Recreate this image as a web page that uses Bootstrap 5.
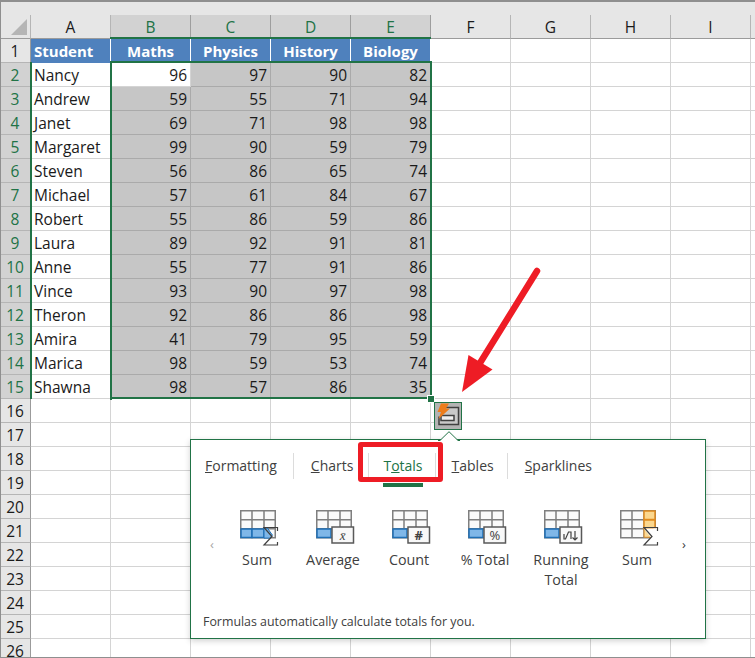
<!DOCTYPE html>
<html lang="en">
<head>
  <meta charset="UTF-8">
  <meta name="viewport" content="width=device-width, initial-scale=1.0">
  <title>Quick Analysis</title>
  <link href="https://cdn.jsdelivr.net/npm/bootstrap@5.3.2/dist/css/bootstrap.min.css" rel="stylesheet">
  <style>
    html, body { margin: 0; background: #fff; overflow: hidden; }
    .sheet { position: relative; width: 755px; height: 658px; overflow: hidden; font-family: "Open Sans", "Noto Sans", sans-serif; font-size: 15.5px; color: #1a1a1a; background: #fff; }
    .sheet-frame { position: absolute; inset: 0; border: solid #8f8f8f; border-width: 2px 0 1px 1px; pointer-events: none; z-index: 5; }
    .top-strip { height: 15px; background: #e6e6e6; }
    .sheet-grid { display: grid; grid-template-columns: 31px repeat(9, 80px) 45px; grid-auto-rows: 24px; }
    .xl-cell { border-right: 1px solid #d4d4d4; border-bottom: 1px solid #d4d4d4; padding: 0 3px; line-height: 25px; white-space: nowrap; overflow: hidden; }
    .xl-num { text-align: right; }
    .xl-sel { background: #c6c6c6; border-color: #aaa; }
    .xl-tbl { background: #4f81bd; color: #fff; font-weight: 700; font-size: 15px; border-right-color: #fff; border-bottom-color: #4f81bd; }
    .xl-col { background: #e6e6e6; text-align: center; border-right-color: #b5b5b5; border-bottom-color: #9b9b9b; }
    .xl-col.on { background: #d2d2d2; color: #217346; border-right-color: #9e9e9e; }
    .xl-row { background: #e6e6e6; text-align: center; padding: 0; border-right-color: #9b9b9b; border-bottom-color: #b5b5b5; }
    .xl-row.on { background: #d2d2d2; color: #217346; }
    .corner-tri { width: 0; height: 0; border-style: solid; border-width: 0 0 16px 16px; border-color: transparent transparent #b5b5b5 transparent; margin: 4px 0 0 11px; }
    .sel-line { position: absolute; background: #217346; z-index: 2; }
    .sel-handle { position: absolute; left: 427px; top: 395px; width: 6px; height: 6px; background: #217346; border: 1px solid #fff; box-sizing: content-box; z-index: 3; }
    .qa-btn { position: absolute; left: 434px; top: 402px; width: 28px; height: 28px; background: #b3b3b3; border: 1px solid #217346; z-index: 3; display: flex; align-items: center; justify-content: center; }
    .qa-panel { position: absolute; left: 190px; top: 439px; width: 516px; height: 200px; background: #fff; border: 1px solid #217346; box-shadow: 0 2px 6px rgba(0, 0, 0, .18); z-index: 3; font-family: "Open Sans", "Noto Sans", sans-serif; color: #404040; }
    .qa-notch { position: absolute; left: 247px; top: -9px; width: 22px; height: 10px; }
    .qa-tabs { height: 26px; margin-top: 13px; padding-left: 14px; font-size: 14px; }
    .qa-tab { line-height: 26px; white-space: nowrap; }
    .qa-tab.on { color: #217346; position: relative; }
    .qa-tab.on::after { content: ""; position: absolute; left: 0; right: 0; top: 30px; height: 4px; background: #217346; }
    .qa-sep { width: 1px; height: 26px; background: #dcdcdc; }
    .qa-gallery { position: absolute; left: 28px; top: 70px; }
    .qa-item { width: 76px; text-align: center; font-size: 14.3px; line-height: 20px; color: #404040; }
    .qa-item svg { display: block; margin: 0 0 4px 21px; }
    .qa-chev { position: absolute; top: 96px; font-size: 13px; line-height: 16px; }
    .qa-foot { position: absolute; left: 12px; top: 173px; font-size: 12.4px; line-height: 18px; color: #404040; }
    .red-box { position: absolute; left: 358px; top: 442px; width: 85px; height: 40px; border: 5px solid #ee1c25; border-radius: 3px; z-index: 4; }
    .red-arrow { position: absolute; left: 0; top: 0; z-index: 4; }
  </style>
</head>
<body>
  <div class="sheet">
    <div class="top-strip"></div>
    <div class="sheet-grid" id="sheetGrid"></div>
    <div class="sheet-frame"></div>

    <!-- selection outline -->
    <div class="sel-line" style="left:110px;top:37px;width:321px;height:2px"></div>
    <div class="sel-line" style="left:110px;top:61px;width:322px;height:2px"></div>
    <div class="sel-line" style="left:30px;top:62px;width:2px;height:337px"></div>
    <div class="sel-line" style="left:110px;top:62px;width:2px;height:338px"></div>
    <div class="sel-line" style="left:430px;top:62px;width:2px;height:335px"></div>
    <div class="sel-line" style="left:110px;top:397px;width:318px;height:2px"></div>
    <div class="sel-handle"></div>

    <!-- quick analysis button -->
    <div class="qa-btn">
      <svg width="26" height="26" viewBox="0 0 26 26">
        <path d="M11 4.500h12.500v17H4v-8" fill="#c9c9c9" stroke="#404040" stroke-width="1.500"/>
        <path d="M6 12.500h13v5H6z" fill="#efefef" stroke="#404040" stroke-width="1.500"/>
        <path d="M6 .5h8l-3 5h4L3.500 16l2.500-7H2.500z" fill="#ed7d1c"/>
      </svg>
    </div>

    <div class="qa-panel">
      <svg class="qa-notch" viewBox="0 0 22 10"><path d="M0 9.500h2L11 .7 20 9.500h2" fill="#fff" stroke="#217346"/></svg>
      <div class="qa-tabs d-flex align-items-center">
        <span class="qa-tab"><u>F</u>ormatting</span>
        <span class="qa-sep" style="margin:0 17px 0 16px"></span>
        <span class="qa-tab"><u>C</u>harts</span>
        <span class="qa-sep" style="margin:0 14px 0 15px"></span>
        <span class="qa-tab on">T<u>o</u>tals</span>
        <span class="qa-sep" style="margin:0 16px 0 12px"></span>
        <span class="qa-tab"><u>T</u>ables</span>
        <span class="qa-sep" style="margin:0 17px 0 13px"></span>
        <span class="qa-tab"><u>S</u>parklines</span>
      </div>
      <span class="qa-chev" style="left:19px;color:#a6a6a6">‹</span>
      <div class="qa-gallery d-flex" id="qaGallery"></div>
      <span class="qa-chev" style="left:491px;color:#404040">›</span>
      <div class="qa-foot">Formulas automatically calculate totals for you.</div>
    </div>

    <div class="red-box"></div>
    <svg class="red-arrow" width="755" height="658" viewBox="0 0 755 658">
      <path d="M537 271 480 363" fill="none" stroke="#ee1c25" stroke-width="6.500" stroke-linecap="round"/>
      <path d="M462 392 468.500 355 492.500 369.500z" fill="#ee1c25"/>
    </svg>
  </div>

  <script src="https://cdn.jsdelivr.net/npm/bootstrap@5.3.2/dist/js/bootstrap.bundle.min.js"></script>
  <script>
    const columns = ['A', 'B', 'C', 'D', 'E', 'F', 'G', 'H', 'I', ''];
    const students = [
      ['Student', 'Maths', 'Physics', 'History', 'Biology'],
      ['Nancy', 96, 97, 90, 82],
      ['Andrew', 59, 55, 71, 94],
      ['Janet', 69, 71, 98, 98],
      ['Margaret', 99, 90, 59, 79],
      ['Steven', 56, 86, 65, 74],
      ['Michael', 57, 61, 84, 67],
      ['Robert', 55, 86, 59, 86],
      ['Laura', 89, 92, 91, 81],
      ['Anne', 55, 77, 91, 86],
      ['Vince', 93, 90, 97, 98],
      ['Theron', 92, 86, 86, 98],
      ['Amira', 41, 79, 95, 59],
      ['Marica', 98, 59, 53, 74],
      ['Shawna', 98, 57, 86, 35]
    ];

    // Column headers, then 26 rows of cells
    let html = '<div class="xl-cell xl-col" style="padding:0"><div class="corner-tri"></div></div>';
    columns.forEach((c, i) => {
      html += `<div class="xl-cell xl-col ${i >= 1 && i <= 4 ? 'on' : ''}">${c}</div>`;
    });
    for (let r = 0; r < 26; r++) {
      html += `<div class="xl-cell xl-row ${r >= 1 && r <= 14 ? 'on' : ''}">${r + 1}</div>`;
      for (let c = 0; c < 10; c++) {
        const val = students[r] && students[r][c] !== undefined ? students[r][c] : '';
        let cls = '';
        if (r === 0 && c < 5) cls = 'xl-tbl' + (c > 0 ? ' text-center' : '');
        else if (r > 0 && r < 15 && c > 0 && c < 5) cls = 'xl-num' + (r === 1 && c === 1 ? '' : ' xl-sel');
        html += `<div class="xl-cell ${cls}">${val}</div>`;
      }
    }
    document.getElementById('sheetGrid').innerHTML = html;

    // Table icon: 3x3 grid, overlay goes on top
    const gridLines = '<path d="M.75.75h34.500v27H.75zM12 .75v27M24 .75v27M.75 9.750h34.500M.75 18.750h34.500" fill="#fafafa" stroke="#7f7f7f" stroke-width="1.500"/>';
    const sigmaMask = '<path d="M24 18.500h16V36H24l7-8.500z" fill="#fff"/>';
    const sigma = '<path d="M37.500 21v-3.500H24l8 9-8 8.500h13.500v-3" fill="none" stroke="#404040" stroke-width="1.200"/>';
    const blueCell = (x, w) => `<rect x="${x}" y="19" width="${w}" height="8.500" fill="#7fb7e8" stroke="#1f6fb5" stroke-width="1.500"/>`;
    const orangeCell = y => `<rect x="24" y="${y}" width="11" height="8.500" fill="#fbd78e" stroke="#e08a1e" stroke-width="1.500"/>`;
    const badge = inner => `<rect x="16" y="17" width="21.500" height="16" fill="#f8f8f8" stroke="#595959" stroke-width="1.500"/>${inner}`;
    const badgeText = (t, extra) => `<text x="26.750" y="30" text-anchor="middle" font-size="13" fill="#404040" ${extra}>${t}</text>`;

    const items = [
      { label: 'Sum', icon: gridLines + blueCell(1, 11) + blueCell(12, 12) + '<path d="M24 18.250h3.500l5 7-3 2.900H24z" fill="#7fb7e8" stroke="#1f6fb5"/>' + sigma },
      { label: 'Average', icon: gridLines + blueCell(1, 14) + badge(badgeText('x̄', 'font-family="Liberation Serif, serif" font-style="italic"')) },
      { label: 'Count', icon: gridLines + blueCell(1, 14) + badge(badgeText('#', 'font-weight="700"')) },
      { label: '% Total', icon: gridLines + blueCell(1, 14) + badge(badgeText('%', '')) },
      { label: 'Running<br>Total', icon: gridLines + blueCell(1, 14) + badge('<path d="M20 24v5h1.500l3-7h2.500v7M31 21v9m-2.500-2.500L31 30l2.500-2.500" fill="none" stroke="#404040" stroke-width="1.200"/>') },
      { label: 'Sum', icon: gridLines + orangeCell(1) + orangeCell(10) + sigmaMask + '<path d="M24 18.250h9v9H24z" fill="#fbd78e" stroke="#e08a1e" opacity=".9"/>' + sigmaMask + sigma }
    ];
    document.getElementById('qaGallery').innerHTML = items.map(item => `
      <div class="qa-item">
        <svg width="40" height="36" viewBox="0 0 40 36">${item.icon}</svg>
        ${item.label}
      </div>`).join('');
  </script>
</body>
</html>
